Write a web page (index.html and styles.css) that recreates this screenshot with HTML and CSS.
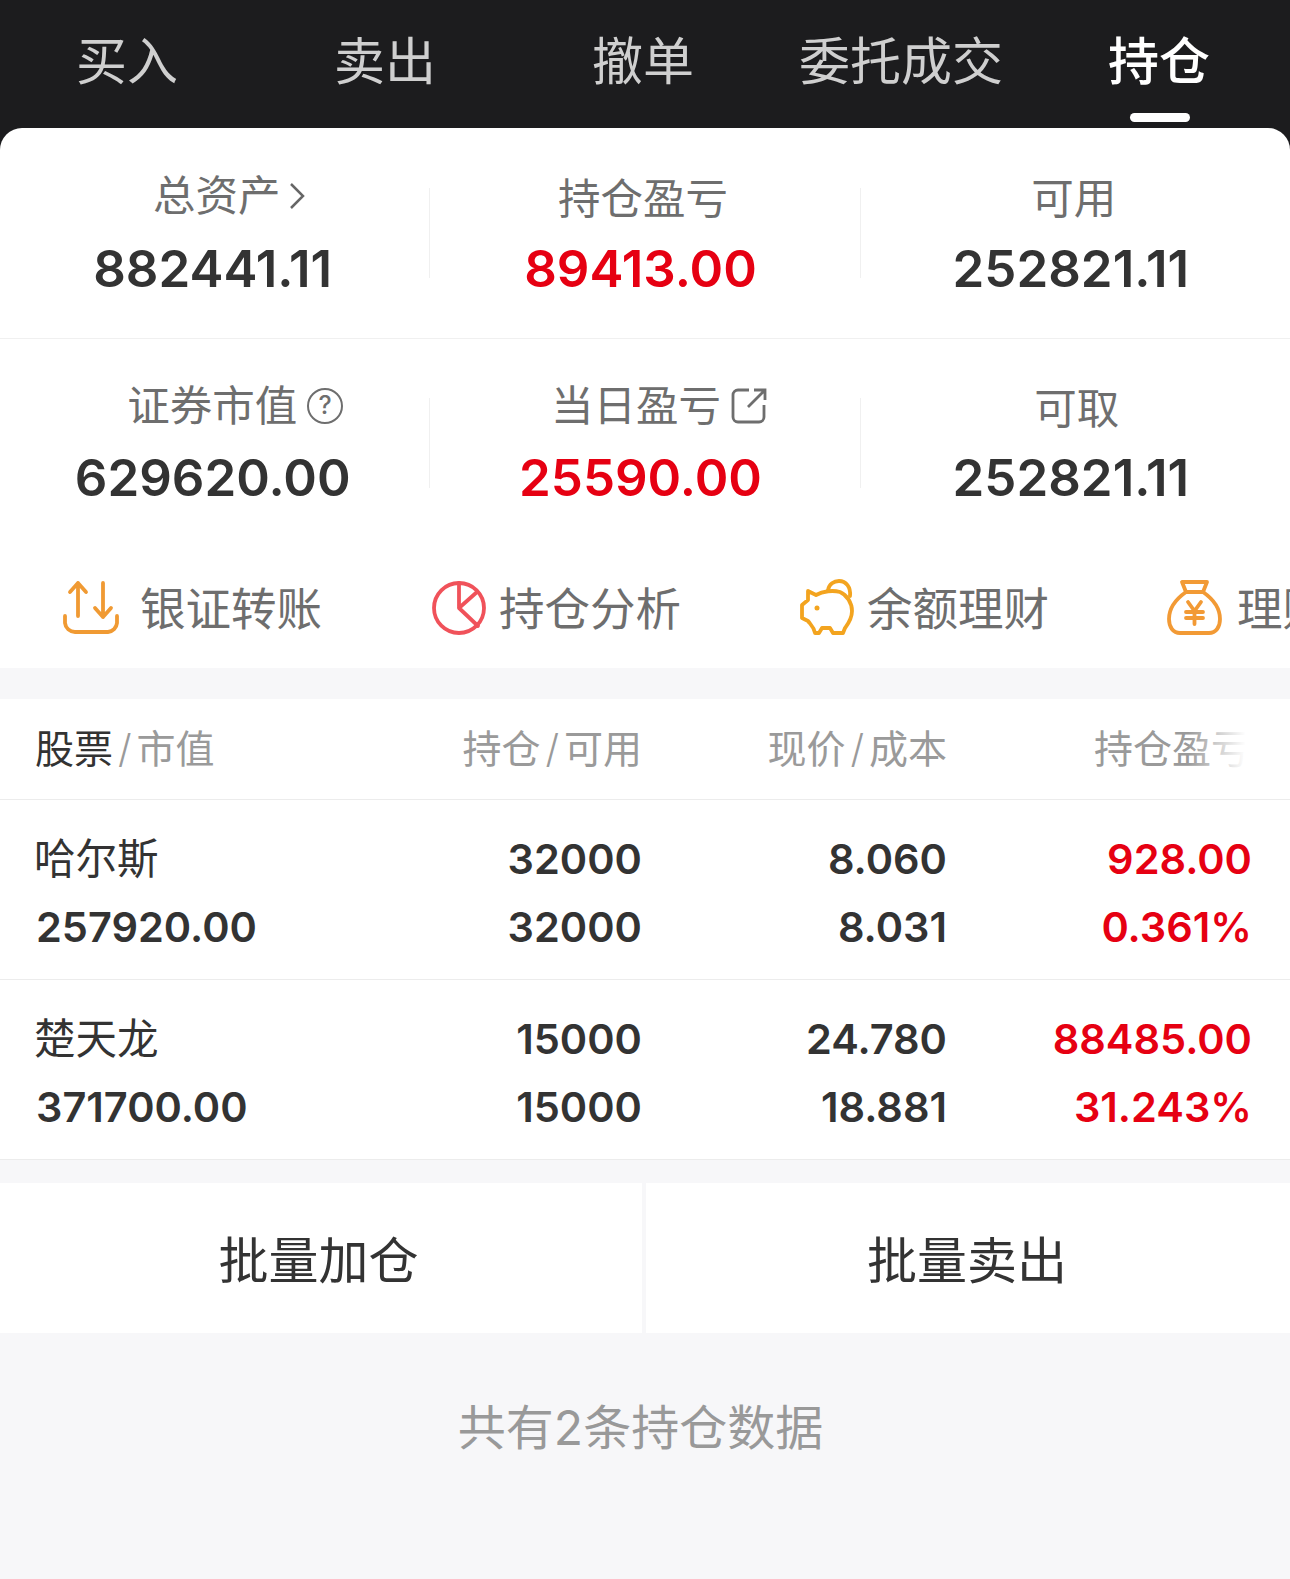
FILE: index.html
```html
<!DOCTYPE html>
<html lang="zh-CN">
<head>
    <meta charset="UTF-8">
    <meta name="viewport" content="width=device-width, initial-scale=1.0">
    <title>持仓</title>
    <link rel="stylesheet" href="styles.css">
</head>
<body>
    <nav class="tabs">
        <a class="tab">买入</a>
        <a class="tab">卖出</a>
        <a class="tab">撤单</a>
        <a class="tab">委托成交</a>
        <a class="tab active">持仓<i class="tab-bar"></i></a>
    </nav>

    <div class="card-wrap">
        <div class="card">
            <section class="stats stats-first">
                <div class="stat">
                    <div class="label label-up label-total">总资产
                        <svg class="hang chevron" width="18" height="28" viewBox="0 0 18 28"><path d="M3 2l12 12L3 26"/></svg>
                    </div>
                    <div class="value">882441.11</div>
                </div>
                <div class="divider"></div>
                <div class="stat">
                    <div class="label label-hold">持仓盈亏</div>
                    <div class="value red">89413.00</div>
                </div>
                <div class="divider"></div>
                <div class="stat">
                    <div class="label label-avail">可用</div>
                    <div class="value">252821.11</div>
                </div>
            </section>

            <section class="stats stats-second">
                <div class="stat">
                    <div class="label label-up label-market">证券市值<span class="hang help">?</span></div>
                    <div class="value">629620.00</div>
                </div>
                <div class="divider"></div>
                <div class="stat">
                    <div class="label label-up label-today">当日盈亏
                        <svg class="hang link" width="50" height="50" viewBox="0 0 50 50"><path d="M24 9H13a5 5 0 0 0-5 5v22a5 5 0 0 0 5 5h21a5 5 0 0 0 5-5V24"/><path d="M23 26L40 9M29 9h11v10"/></svg>
                    </div>
                    <div class="value red">25590.00</div>
                </div>
                <div class="divider"></div>
                <div class="stat">
                    <div class="label label-draw">可取</div>
                    <div class="value">252821.11</div>
                </div>
            </section>

            <section class="tools">
                <div class="tool">
                    <svg class="tool-icon" width="85" height="70" viewBox="0 0 85 70" stroke="#f09a33">
                        <path d="M10 41v7a10 10 0 0 0 10 9h33a10 10 0 0 0 9-9v-7"/>
                        <path d="M23 41V8M15 17l8-9 8 9"/>
                        <path d="M48 8v34M40 33l8 9 8-9"/>
                    </svg>
                    <span>银证转账</span>
                </div>
                <div class="tool">
                    <svg class="tool-icon" width="72" height="70" viewBox="0 0 72 70" stroke="#f0525a">
                        <circle cx="32" cy="33" r="25"/>
                        <path d="M32 8v25M32 33l18-16M32 33l19 18"/>
                    </svg>
                    <span>持仓分析</span>
                </div>
                <div class="tool">
                    <svg class="tool-icon" width="72" height="70" viewBox="0 0 72 70" stroke="#f3a41f">
                        <path d="M33 15c1-6 6-9 11-9 7 0 12 6 11 15"/>
                        <path d="M13 16l8 4c7-4 17-5 24-3 7 3 12 11 12 19 0 8-4 13-7 17l-2 5H38l-3-5H27l-3 5h-4c-1-6-4-8-7-12l-6-3V30l6-5z"/>
                        <circle class="tool-dot" cx="22" cy="33" r="2.5"/>
                    </svg>
                    <span>余额理财</span>
                </div>
                <div class="tool">
                    <svg class="tool-icon" width="78" height="70" viewBox="0 0 78 70" stroke="#f29a35">
                        <path d="M23 7h25l-4 10H27z"/>
                        <path d="M27 17C17 24 10 33 10 44c0 8 4 14 11 14h29c7 0 11-6 11-14 0-11-7-20-17-27"/>
                        <path d="M29 27l6.500 9 6.500-9M27 37h17M27 43h17M35.500 36v13"/>
                    </svg>
                    <span>理财</span>
                </div>
            </section>
        </div>
    </div>

    <section class="table">
        <div class="row row-head">
            <div class="cell"><span class="head-strong">股票</span><span class="slash">/</span>市值</div>
            <div class="cell num">持仓<span class="slash">/</span>可用</div>
            <div class="cell num">现价<span class="slash">/</span>成本</div>
            <div class="cell num">持仓盈亏</div>
        </div>
        <div class="row row-stock">
            <div class="cell">
                <div class="name">哈尔斯</div>
                <div>257920.00</div>
            </div>
            <div class="cell num">
                <div>32000</div>
                <div>32000</div>
            </div>
            <div class="cell num">
                <div>8.060</div>
                <div>8.031</div>
            </div>
            <div class="cell num red">
                <div>928.00</div>
                <div>0.361%</div>
            </div>
        </div>
        <div class="row row-stock">
            <div class="cell">
                <div class="name">楚天龙</div>
                <div>371700.00</div>
            </div>
            <div class="cell num">
                <div>15000</div>
                <div>15000</div>
            </div>
            <div class="cell num">
                <div>24.780</div>
                <div>18.881</div>
            </div>
            <div class="cell num red">
                <div>88485.00</div>
                <div>31.243%</div>
            </div>
        </div>
    </section>

    <div class="batch">
        <a class="batch-btn batch-add">批量加仓</a>
        <a class="batch-btn batch-sell">批量卖出</a>
    </div>

    <div class="note">共有2条持仓数据</div>
</body>
</html>
```

FILE: styles.css
```css
body {
    margin: 0;
    height: 1579px;
    overflow: hidden;
    background: #f7f7f9;
    color: #333;
    font-family: Inter, "Noto Sans CJK SC", sans-serif;
}
.tabs {
    display: flex;
    height: 128px;
    background: #1c1c1e;
}
.tab {
    flex: 1;
    display: flex;
    flex-direction: column;
    align-items: center;
    box-sizing: border-box;
    padding-top: 31px;
    padding-right: 4px;
    line-height: 62px;
    font-size: 51px;
    color: #cfcfcf;
}
.tab.active {
    color: #fff;
    font-weight: 500;
}
.tab-bar {
    width: 60px;
    height: 9px;
    margin-top: 20px;
    margin-left: 2px;
    background: #fff;
    border-radius: 5px;
}
.card-wrap {
    background: #1c1c1e;
}
.card {
    background: #fff;
    border-radius: 22px 22px 0 0;
}
.stats {
    display: grid;
    grid-template-columns: 1fr 1px 1fr 1px 1fr;
}
.stats-first {
    height: 210px;
    border-bottom: 1px solid #f0f0f0;
}
.stats-second {
    height: 208px;
}
.stat {
    display: flex;
    flex-direction: column;
    align-items: center;
}
.stats-first .stat {
    padding-top: 46px;
}
.stats-second .stat {
    padding-top: 45px;
}
.divider {
    height: 90px;
    align-self: center;
    background: #f0f0f0;
}
.label {
    position: relative;
    height: 50px;
    line-height: 50px;
    font-size: 42.500px;
    color: #6e6e6e;
}
.label-up {
    margin-top: -3px;
    margin-bottom: 3px;
}
.label-total {
    margin-left: 4px;
}
.label-hold {
    margin-right: 4px;
}
.label-avail {
    margin-right: 3px;
}
.label-market {
    margin-right: 5px;
}
.label-today {
    margin-right: 18px;
}
.label-draw {
    margin-left: 3px;
}
.value {
    margin-top: 14px;
    margin-right: 4px;
    line-height: 62px;
    font-size: 51px;
    font-weight: 600;
}
.divider + .stat .value {
    margin-right: 9px;
}
.stats-second .value {
    margin-top: 13px;
}
.red {
    color: #e60012;
}
.hang {
    position: absolute;
    top: 50%;
    transform: translateY(-50%);
}
.chevron {
    left: calc(100% + 8px);
    fill: none;
    stroke: #666;
    stroke-width: 2.5;
}
.help {
    left: calc(100% + 10px);
    box-sizing: border-box;
    width: 36px;
    height: 36px;
    border: 2.500px solid #6e6e6e;
    border-radius: 50%;
    line-height: 31px;
    text-align: center;
    font-size: 25px;
    font-weight: 500;
}
.link {
    left: calc(100% + 4px);
    fill: none;
    stroke: #6e6e6e;
    stroke-width: 2.8;
}
.tools {
    display: grid;
    grid-template-columns: 372px 368px 364px 368px;
    align-items: center;
    height: 121px;
    padding-top: 4px;
    padding-left: 55px;
    box-sizing: border-box;
    overflow: hidden;
}
.tool {
    display: flex;
    align-items: center;
    font-size: 45.500px;
    color: #6e6e6e;
    white-space: nowrap;
}
.tool span {
    padding-bottom: 8px;
}
.tool-icon {
    flex: none;
    fill: none;
    stroke-width: 3.800;
    stroke-linecap: round;
    stroke-linejoin: round;
}
.tool-dot {
    fill: #f3a41f;
    stroke: none;
}
.table {
    margin-top: 31px;
    background: #fff;
}
.row {
    display: grid;
    grid-template-columns: 300px 306px 305px 305px;
    padding: 0 38px 0 36px;
    border-bottom: 1px solid #ececec;
}
.row-head {
    position: relative;
    align-items: center;
    height: 100px;
    font-size: 39px;
    color: #9a9a9a;
}
.row-head .cell {
    padding-bottom: 6px;
}
.row-head .cell:last-child {
    padding-right: 2px;
}
.row-head::after {
    content: "";
    position: absolute;
    top: 0;
    right: 30px;
    bottom: 0;
    width: 72px;
    background: linear-gradient(to right, rgba(255, 255, 255, 0), #fff 80%);
}
.head-strong {
    margin-left: -1px;
    color: #333;
}
.slash {
    margin: 0 5px;
    font-weight: 300;
}
.row-stock {
    box-sizing: content-box;
    height: 154.500px;
    padding-top: 24.500px;
    line-height: 68px;
    font-size: 41.500px;
    font-weight: 600;
}
.num {
    text-align: right;
}
.name {
    margin-left: -2px;
    height: 68px;
    font-size: 41.500px;
    font-weight: 400;
}
.batch {
    display: flex;
    gap: 4px;
    height: 150px;
    margin-top: 23px;
}
.batch-btn {
    box-sizing: border-box;
    display: flex;
    align-items: center;
    justify-content: center;
    padding-bottom: 2px;
    background: #fff;
    font-size: 50px;
    color: #333;
}
.batch-add {
    flex: 0 0 642px;
    padding-right: 5px;
}
.batch-sell {
    flex: 1;
    padding-right: 2px;
}
.note {
    padding-top: 64px;
    padding-right: 9px;
    line-height: 62px;
    text-align: center;
    font-size: 48px;
    color: #999;
}
```
